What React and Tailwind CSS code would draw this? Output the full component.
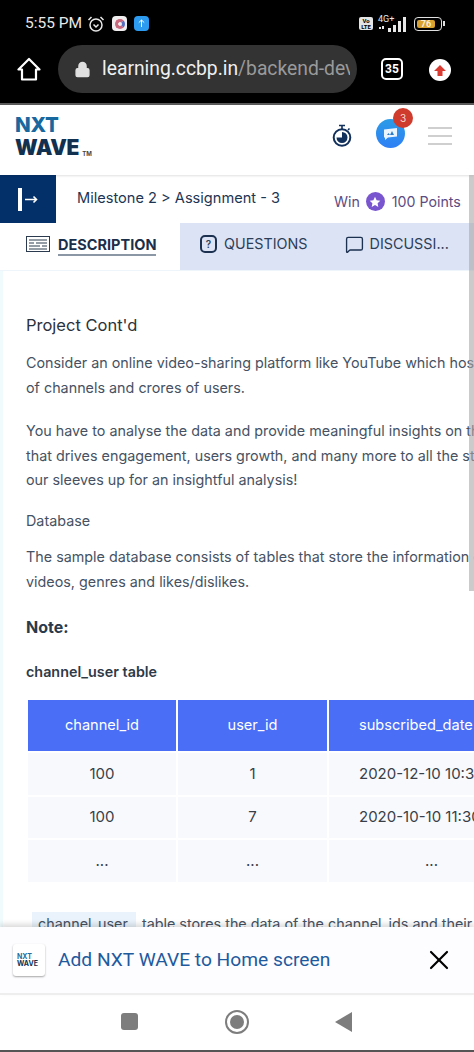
import { Lock, MessageSquare, X } from "lucide-react";

const rows = [
    ["100", "1", "2020-12-10 10:30:45"],
    ["100", "7", "2020-10-10 11:30:45"],
    ["...", "...", "..."],
];

function StatusBar() {
    return (
        <div className="h-[45px] flex items-center justify-between pl-[25px] pr-[29px] pt-[2px] text-[#e8e8e8] font-['Roboto',sans-serif]">
            <div className="flex items-center">
                <span className="text-[15.5px] w-[62px] whitespace-nowrap">5:55 PM</span>
                {/* alarm */}
                <svg width="18" height="18" viewBox="0 0 18 18" fill="none" stroke="#e8e8e8" strokeWidth="1.5">
                    <circle cx="9" cy="10" r="6" />
                    <path d="M6.5 9.5 9 12l2.5-2.5M1.5 5 4.5 2M16.5 5l-3-3" />
                </svg>
                <div className="w-[15px] h-[15px] ml-[7px] rounded-[4px] bg-[#f1eef0] flex items-center justify-center">
                    <div className="w-[10px] h-[10px] rounded-full border-[3px] border-[#c9677c] border-r-[#5a6fc0]" />
                </div>
                <div className="w-[15px] h-[15px] ml-[7px] rounded-[4px] bg-[#2d9cf0] flex items-center justify-center">
                    <svg width="9" height="9" viewBox="0 0 9 9" fill="none" stroke="#fff" strokeWidth="1">
                        <path d="M4.5 8V1M1.8 3.6 4.5 1l2.7 2.6" />
                    </svg>
                </div>
            </div>
            <div className="flex items-center">
                <div className="w-[14px] h-[13px] rounded-[2px] bg-[#e4e4e4] text-black text-[6px] font-bold leading-[6px] text-center pt-[1px]">
                    Vo<br />LTE
                </div>
                <div className="relative w-[31px] h-[18px] ml-[5px]">
                    <span className="absolute left-0 top-[-1px] text-[9px] leading-[10px]">4G+</span>
                    <svg width="31" height="18" viewBox="0 0 31 18" fill="#e8e8e8" className="absolute left-0 top-0">
                        <rect x="1" y="12" width="2" height="2" />
                        <rect x="4" y="11" width="2" height="3" />
                        <rect x="10" y="13" width="3" height="4" />
                        <rect x="15" y="10" width="3" height="7" />
                        <rect x="20" y="6" width="3" height="11" />
                        <rect x="25" y="2" width="3" height="15" />
                    </svg>
                </div>
                <div className="ml-[5px] w-[28px] h-[14px] rounded-[4px] border border-[#e0e0e0] p-[2px] flex">
                    <div className="w-[18px] h-full rounded-[2px] bg-[#d9a12f] text-[9px] leading-[9px] font-bold text-[#f6efd8] text-center">76</div>
                </div>
                <div className="w-[2px] h-[5px] bg-[#e0e0e0] ml-[1px]" />
            </div>
        </div>
    );
}

function BrowserBar() {
    return (
        <div className="h-[58px] flex items-start pl-[17px] font-['Roboto',sans-serif]">
            <svg width="24" height="24" viewBox="0 0 24 24" fill="none" stroke="#fff" strokeWidth="2.2" strokeLinejoin="round" className="mt-[12px] shrink-0">
                <path d="M12 2 1.5 12.5H5V22.5H19V12.5H22.5z" />
            </svg>
            <div className="ml-[17px] w-[299px] h-[48px] rounded-full bg-[#333333] flex items-center pl-[16px] pr-[7px] shrink-0">
                <Lock size={17} className="text-[#e0e0e0] fill-[#e0e0e0] shrink-0" />
                <div className="ml-[11px] overflow-hidden whitespace-nowrap text-[19.3px]">
                    <span className="text-[#f0f0f0]">learning.ccbp.in</span>
                    <span className="text-[#9a9a9a]">/backend-development</span>
                </div>
            </div>
            <div className="ml-[24px] mt-[13px] w-[22px] h-[22px] rounded-[5px] border-2 border-white text-white text-[12px] font-bold flex items-center justify-center shrink-0">
                35
            </div>
            <div className="ml-[26px] mt-[14px] w-[22px] h-[22px] rounded-full bg-white flex items-center justify-center shrink-0">
                <svg width="12" height="11" viewBox="0 0 12 11" fill="#d93a32">
                    <path d="M6 0 12 6H8.5v5h-5V6H0z" />
                </svg>
            </div>
        </div>
    );
}

function SiteHeader() {
    return (
        <div className="relative h-[70px] bg-white flex items-start pl-[15px] shadow-[0_1px_2px_rgba(0,0,0,0.12)] font-['Inter',sans-serif]">
            <div className="mt-[10px] w-[82px]">
                <div className="text-[20.5px] leading-[20px] font-extrabold tracking-[-0.2px] text-[#17689f]">NXT</div>
                <div className="flex items-end mt-[2px]">
                    <span className="text-[21px] leading-[22px] font-black tracking-[-0.3px] text-[#12304f]">WAVE</span>
                    <span className="text-[6px] leading-[10px] font-bold ml-[3px] text-[#444]">TM</span>
                </div>
            </div>
            {/* timer */}
            <svg width="20" height="24" viewBox="0 0 20 24" fill="none" className="ml-[235px] mt-[19px] shrink-0">
                <path d="M7 1.5h6M10 1.5V5M16 6l1.5-1.5" stroke="#12305c" strokeWidth="1.6" />
                <circle cx="10" cy="13.5" r="8.3" stroke="#12305c" strokeWidth="2" />
                <path d="M10 8a5.5 5.5 0 1 1-5.5 5.5H10z" fill="#12305c" />
            </svg>
            <div className="relative ml-[24px] mt-[14px] w-[29px] h-[29px] rounded-full bg-gradient-to-b from-[#2c9be6] to-[#2f7ff5] flex items-center justify-center shrink-0">
                <svg width="15" height="14" viewBox="0 0 15 14">
                    <path d="M1 2.5 14 1v8.5L5 10.5 2 13V10.5H1z" fill="#e9f4fd" />
                    <path d="M4 8l1.5-2L7 8zM7 8l2-4 2 4z" fill="#2c7cc8" />
                </svg>
                <div className="absolute right-[-8px] top-[-11px] w-[20px] h-[20px] rounded-full bg-[#cf3b2c] text-[#f7d8d2] text-[10px] flex items-center justify-center">
                    3
                </div>
            </div>
            <div className="ml-[23px] mt-[22px] w-[24px] flex flex-col gap-[6px] shrink-0">
                <div className="h-[2px] bg-[#cfcfcf]" />
                <div className="h-[2px] bg-[#cfcfcf]" />
                <div className="h-[2px] bg-[#cfcfcf]" />
            </div>
        </div>
    );
}

function Breadcrumb() {
    return (
        <div className="h-[48px] bg-white flex font-['Inter',sans-serif]">
            <div className="w-[56px] bg-[#04306a] flex items-center justify-center gap-[3px] shrink-0">
                <div className="w-[4px] h-[23px] bg-white" />
                <svg width="13" height="9" viewBox="0 0 13 9" fill="none" stroke="#fff" strokeWidth="1.6">
                    <path d="M0 4.5h11M8.5 1.5l3 3-3 3" />
                </svg>
            </div>
            <div className="ml-[21px] mt-[14px] text-[14.6px] leading-[18px] text-[#1c3554] whitespace-nowrap w-[257px] shrink-0">
                Milestone 2 &gt; Assignment - 3
            </div>
            <div className="mt-[17px] flex items-start text-[14.2px] leading-[20px] text-[#5d4b82] whitespace-nowrap">
                <span>Win</span>
                <div className="ml-[6px] w-[19px] h-[19px] rounded-full bg-[#7a55d0] flex items-center justify-center shrink-0">
                    <svg width="12" height="12" viewBox="0 0 12 12" fill="#fff">
                        <path d="M6 .8l1.6 3.4 3.7.5-2.7 2.5.7 3.7L6 9.1l-3.3 1.8.7-3.7L.7 4.7l3.7-.5z" />
                    </svg>
                </div>
                <span className="ml-[7px]">100 Points</span>
            </div>
        </div>
    );
}

function Tabs() {
    return (
        <div className="h-[48px] flex font-['Inter',sans-serif] text-[14.35px] border-b border-[#eef6fb]">
            <div className="w-[180px] bg-white flex items-center pl-[26px] pb-[5px] shrink-0">
                <svg width="24" height="16" viewBox="0 0 24 16" fill="none" stroke="#2b3a4f" strokeWidth="1">
                    <rect x="0.5" y="0.5" width="23" height="15" />
                    <path d="M3 4h18M3 7h5M10 7h11M3 10h11M16 10h5M3 13h18" />
                </svg>
                <span className="ml-[8px] text-[14.5px] font-bold text-[#1b2f4a] border-b-2 border-[#8c97a6] leading-[19px] mt-[2px]">DESCRIPTION</span>
            </div>
            <div className="flex-1 bg-[#dbe3f5] flex items-center pb-[5px] text-[#2c3e57] whitespace-nowrap">
                <div className="ml-[20px] w-[17px] h-[18px] rounded-[5px] border-2 border-[#1c3150] text-[10px] font-semibold flex items-center justify-center shrink-0">?</div>
                <span className="ml-[7px]">QUESTIONS</span>
                <MessageSquare size={19} strokeWidth={1.7} className="ml-[37px] text-[#1c3150] shrink-0" />
                <span className="ml-[6px]">DISCUSSI...</span>
            </div>
        </div>
    );
}

function DataTable() {
    return (
        <table className="mt-[14px] border-separate border-spacing-[2px] table-fixed w-[520px] text-[15px]">
            <thead>
                <tr className="text-[14.6px]">
                    <th className="w-[148px] h-[51px] bg-[#4a6ef5] text-white font-normal">channel_id</th>
                    <th className="w-[149px] bg-[#4a6ef5] text-white font-normal">user_id</th>
                    <th className="bg-[#4a6ef5] text-white font-normal text-left pl-[30px]">subscribed_date</th>
                </tr>
            </thead>
            <tbody>
                {rows.map((row, i) => (
                    <tr key={i}>
                        <td className="h-[41.5px] bg-[#f8f9fd] text-center text-[#383f48]">{row[0]}</td>
                        <td className="bg-[#f8f9fd] text-center text-[#383f48]">{row[1]}</td>
                        <td className="bg-[#f8f9fd] text-[#383f48] text-left pl-[30px] whitespace-nowrap">
                            {row[2] === "..." ? <span className="ml-[66px]">...</span> : row[2]}
                        </td>
                    </tr>
                ))}
            </tbody>
        </table>
    );
}

function Content() {
    return (
        <div className="flex-1 min-h-0 overflow-hidden bg-white border-l-[3px] border-[#f0fbfd] pl-[23px] pt-[44px] font-['Inter',sans-serif] text-[14.35px] leading-[24.5px] text-[#465263] whitespace-nowrap">
            <h2 className="text-[16.5px] leading-[20px] font-normal text-[#2b323b]">Project Cont'd</h2>
            <p className="mt-[16px]">
                Consider an online video-sharing platform like YouTube which hosts tens of thousands
                <br />
                of channels and crores of users.
            </p>
            <p className="mt-[19px]">
                You have to analyse the data and provide meaningful insights on the type of content
                <br />
                that drives engagement, users growth, and many more to all the stakeholders. Let's roll
                <br />
                our sleeves up for an insightful analysis!
            </p>
            <p className="mt-[16px]">Database</p>
            <p className="mt-[12px]">
                The sample database consists of tables that store the information of channels, users,
                <br />
                videos, genres and likes/dislikes.
            </p>
            <p className="mt-[21px] text-[16px] font-bold text-[#2a3a4b]">Note:</p>
            <p className="mt-[20px] font-semibold text-[#2f3a47]">channel_user table</p>
            <DataTable />
            <p className="mt-[28px] ml-[6px]">
                <span className="bg-[#eaf3fc] pl-[6px] pr-[8px] py-[3px]">channel_user</span>
                <span className="ml-[6px]">table stores the data of the channel_ids and their subscribers</span>
            </p>
        </div>
    );
}

function InstallBanner() {
    return (
        <div className="relative h-[68px] bg-[#fdfcfe] flex items-center pl-[13px] border-b-2 border-[#eeeeee] shadow-[0_-3px_5px_rgba(0,0,0,0.14)] font-['Roboto',sans-serif] shrink-0">
            <div className="w-[32px] h-[32px] rounded-[3px] bg-white shadow-[0_1px_2px_rgba(0,0,0,0.35)] flex flex-col justify-center pl-[4px] font-['Inter',sans-serif] font-bold shrink-0">
                <span className="text-[7px] leading-[7px] text-[#2a6a9a]">NXT</span>
                <span className="text-[7px] leading-[8px] text-[#12304f]">WAVE</span>
            </div>
            <span className="ml-[13px] w-[365px] text-[19.2px] text-[#1d5a9e] whitespace-nowrap">Add NXT WAVE to Home screen</span>
            <X size={32} strokeWidth={1.6} className="text-black shrink-0" />
        </div>
    );
}

function NavBar() {
    return (
        <div className="h-[55px] bg-white flex items-center pl-[121px] pb-[2px] shrink-0">
            <div className="w-[17px] h-[17px] rounded-[3px] bg-[#7d7d7d]" />
            <div className="ml-[87px] w-[24px] h-[24px] rounded-full border-2 border-[#7d7d7d] flex items-center justify-center">
                <div className="w-[14px] h-[14px] rounded-full bg-[#7d7d7d]" />
            </div>
            <svg width="17" height="20" viewBox="0 0 17 20" fill="#7d7d7d" className="ml-[86px]">
                <path d="M0 10 17 0v20z" />
            </svg>
        </div>
    );
}

export default function App() {
    return (
        <div className="relative w-[474px] h-[1052px] overflow-hidden flex flex-col bg-white">
            <div className="h-[105px] bg-black border-b-2 border-[#5a5a5a] shrink-0">
                <StatusBar />
                <BrowserBar />
            </div>
            <SiteHeader />
            <Breadcrumb />
            <Tabs />
            <Content />
            <InstallBanner />
            <NavBar />
            <div className="h-[2px] bg-[#555555] shrink-0" />
            {/* page scrollbar, lies over the content */}
            <div className="absolute right-0 top-[175px] w-[5px] h-[416px] bg-[#a8a8a8]/60" />
        </div>
    );
}
